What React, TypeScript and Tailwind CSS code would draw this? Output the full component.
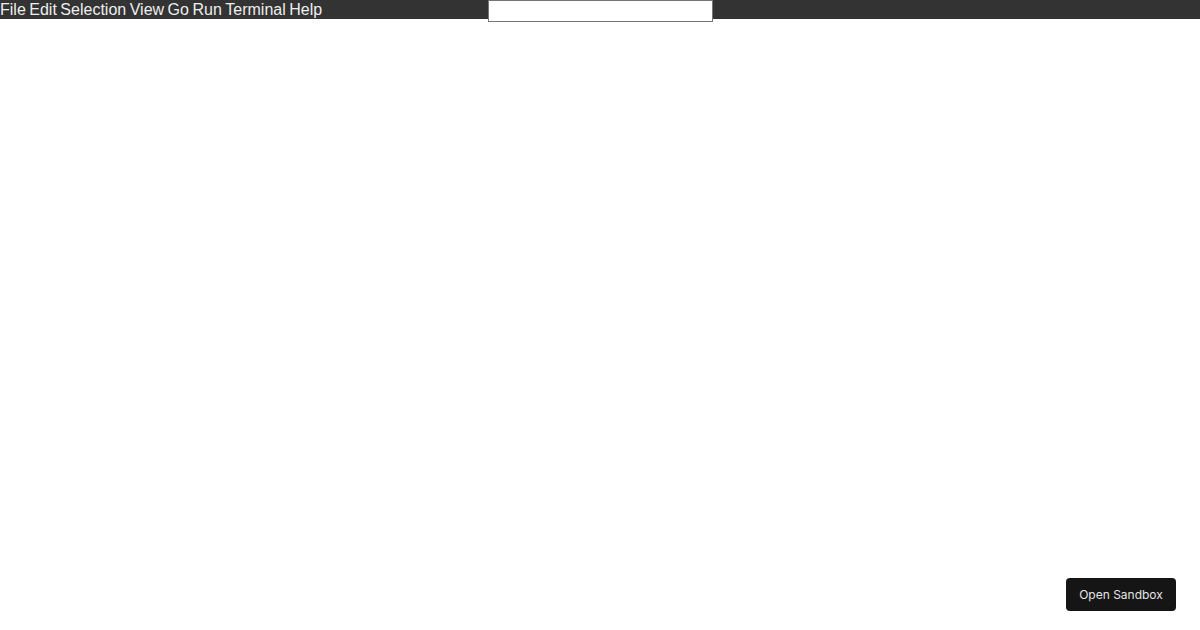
export default function App() {
  const menus = ["File", "Edit", "Selection", "View", "Go", "Run", "Terminal", "Help"];

  return (
    <div className="min-h-[630px] bg-white font-['Liberation_Sans',Arial,sans-serif]">
      <div className="relative flex h-[19px] items-start bg-[#333333] text-base leading-[19px] text-[#eeeeee]">
        <div className="flex gap-[3.5px]">
          {menus.map((m) => (
            <span key={m}>{m}</span>
          ))}
        </div>
        <input
          type="text"
          className="absolute left-[488px] top-0 h-[22px] w-[225px] border border-[#767676] bg-white px-[2px] text-[13px] text-black outline-none"
        />
      </div>

      <button className="fixed bottom-[19px] right-[24px] flex h-[33px] w-[110px] items-center justify-center rounded-[4px] bg-[#151515] font-['Inter',sans-serif] text-[12px] text-[#e5e5e5]">
        Open Sandbox
      </button>
    </div>
  );
}
